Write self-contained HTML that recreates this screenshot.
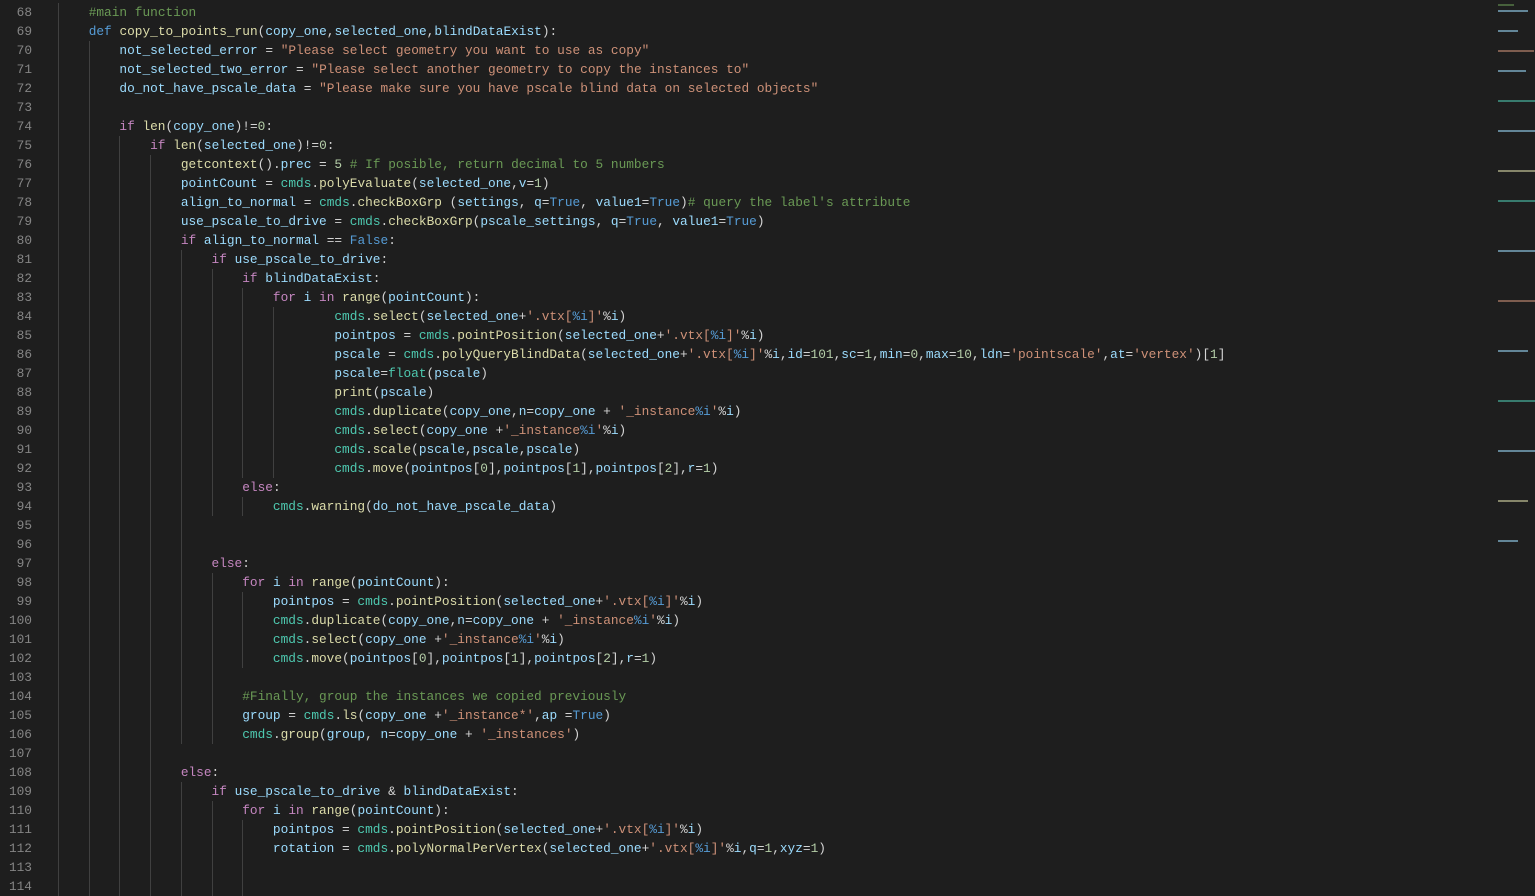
<!DOCTYPE html>
<html><head><meta charset="utf-8"><style>
html,body{margin:0;padding:0;background:#1e1e1e;width:1535px;height:887px;overflow:hidden}
.ln{position:absolute;left:0;width:32px;text-align:right;color:#858585;font:12.8px/19px "Liberation Mono",monospace}
.code{position:absolute;left:58px;top:3px;font:12.8px/19px "Liberation Mono",monospace;color:#d4d4d4}
.l{height:19px;white-space:pre}
i{display:inline-block;width:4ch;height:19px;vertical-align:top;box-shadow:inset 1px 0 #404040;font-style:normal}
.k{color:#c586c0}.d{color:#569cd6}.v{color:#9cdcfe}.f{color:#dcdcaa}.c{color:#4ec9b0}.s{color:#ce9178}.n{color:#b5cea8}.m{color:#6a9955}
.mm{position:absolute;left:1498px;height:2px;opacity:.55}
</style></head><body>
<div class="ln" style="top:3px">68<br>69<br>70<br>71<br>72<br>73<br>74<br>75<br>76<br>77<br>78<br>79<br>80<br>81<br>82<br>83<br>84<br>85<br>86<br>87<br>88<br>89<br>90<br>91<br>92<br>93<br>94<br>95<br>96<br>97<br>98<br>99<br>100<br>101<br>102<br>103<br>104<br>105<br>106<br>107<br>108<br>109<br>110<br>111<br>112<br>113<br>114</div>
<div class="code">
<div class="l"><i></i><span class="m">#main function</span></div>
<div class="l"><i></i><span class="d">def</span> <span class="f">copy_to_points_run</span>(<span class="v">copy_one</span>,<span class="v">selected_one</span>,<span class="v">blindDataExist</span>):</div>
<div class="l"><i></i><i></i><span class="v">not_selected_error</span> = <span class="s">"Please select geometry you want to use as copy"</span></div>
<div class="l"><i></i><i></i><span class="v">not_selected_two_error</span> = <span class="s">"Please select another geometry to copy the instances to"</span></div>
<div class="l"><i></i><i></i><span class="v">do_not_have_pscale_data</span> = <span class="s">"Please make sure you have pscale blind data on selected objects"</span></div>
<div class="l"><i></i><i></i></div>
<div class="l"><i></i><i></i><span class="k">if</span> <span class="f">len</span>(<span class="v">copy_one</span>)!=<span class="n">0</span>:</div>
<div class="l"><i></i><i></i><i></i><span class="k">if</span> <span class="f">len</span>(<span class="v">selected_one</span>)!=<span class="n">0</span>:</div>
<div class="l"><i></i><i></i><i></i><i></i><span class="f">getcontext</span>().<span class="v">prec</span> = <span class="n">5</span> <span class="m"># If posible, return decimal to 5 numbers</span></div>
<div class="l"><i></i><i></i><i></i><i></i><span class="v">pointCount</span> = <span class="c">cmds</span>.<span class="f">polyEvaluate</span>(<span class="v">selected_one</span>,<span class="v">v</span>=<span class="n">1</span>)</div>
<div class="l"><i></i><i></i><i></i><i></i><span class="v">align_to_normal</span> = <span class="c">cmds</span>.<span class="f">checkBoxGrp</span> (<span class="v">settings</span>, <span class="v">q</span>=<span class="d">True</span>, <span class="v">value1</span>=<span class="d">True</span>)<span class="m"># query the label's attribute</span></div>
<div class="l"><i></i><i></i><i></i><i></i><span class="v">use_pscale_to_drive</span> = <span class="c">cmds</span>.<span class="f">checkBoxGrp</span>(<span class="v">pscale_settings</span>, <span class="v">q</span>=<span class="d">True</span>, <span class="v">value1</span>=<span class="d">True</span>)</div>
<div class="l"><i></i><i></i><i></i><i></i><span class="k">if</span> <span class="v">align_to_normal</span> == <span class="d">False</span>:</div>
<div class="l"><i></i><i></i><i></i><i></i><i></i><span class="k">if</span> <span class="v">use_pscale_to_drive</span>:</div>
<div class="l"><i></i><i></i><i></i><i></i><i></i><i></i><span class="k">if</span> <span class="v">blindDataExist</span>:</div>
<div class="l"><i></i><i></i><i></i><i></i><i></i><i></i><i></i><span class="k">for</span> <span class="v">i</span> <span class="k">in</span> <span class="f">range</span>(<span class="v">pointCount</span>):</div>
<div class="l"><i></i><i></i><i></i><i></i><i></i><i></i><i></i><i></i>    <span class="c">cmds</span>.<span class="f">select</span>(<span class="v">selected_one</span>+<span class="s">'.vtx[<span class="d">%i</span>]'</span>%<span class="v">i</span>)</div>
<div class="l"><i></i><i></i><i></i><i></i><i></i><i></i><i></i><i></i>    <span class="v">pointpos</span> = <span class="c">cmds</span>.<span class="f">pointPosition</span>(<span class="v">selected_one</span>+<span class="s">'.vtx[<span class="d">%i</span>]'</span>%<span class="v">i</span>)</div>
<div class="l"><i></i><i></i><i></i><i></i><i></i><i></i><i></i><i></i>    <span class="v">pscale</span> = <span class="c">cmds</span>.<span class="f">polyQueryBlindData</span>(<span class="v">selected_one</span>+<span class="s">'.vtx[<span class="d">%i</span>]'</span>%<span class="v">i</span>,<span class="v">id</span>=<span class="n">101</span>,<span class="v">sc</span>=<span class="n">1</span>,<span class="v">min</span>=<span class="n">0</span>,<span class="v">max</span>=<span class="n">10</span>,<span class="v">ldn</span>=<span class="s">'pointscale'</span>,<span class="v">at</span>=<span class="s">'vertex'</span>)[<span class="n">1</span>]</div>
<div class="l"><i></i><i></i><i></i><i></i><i></i><i></i><i></i><i></i>    <span class="v">pscale</span>=<span class="c">float</span>(<span class="v">pscale</span>)</div>
<div class="l"><i></i><i></i><i></i><i></i><i></i><i></i><i></i><i></i>    <span class="f">print</span>(<span class="v">pscale</span>)</div>
<div class="l"><i></i><i></i><i></i><i></i><i></i><i></i><i></i><i></i>    <span class="c">cmds</span>.<span class="f">duplicate</span>(<span class="v">copy_one</span>,<span class="v">n</span>=<span class="v">copy_one</span> + <span class="s">'_instance<span class="d">%i</span>'</span>%<span class="v">i</span>)</div>
<div class="l"><i></i><i></i><i></i><i></i><i></i><i></i><i></i><i></i>    <span class="c">cmds</span>.<span class="f">select</span>(<span class="v">copy_one</span> +<span class="s">'_instance<span class="d">%i</span>'</span>%<span class="v">i</span>)</div>
<div class="l"><i></i><i></i><i></i><i></i><i></i><i></i><i></i><i></i>    <span class="c">cmds</span>.<span class="f">scale</span>(<span class="v">pscale</span>,<span class="v">pscale</span>,<span class="v">pscale</span>)</div>
<div class="l"><i></i><i></i><i></i><i></i><i></i><i></i><i></i><i></i>    <span class="c">cmds</span>.<span class="f">move</span>(<span class="v">pointpos</span>[<span class="n">0</span>],<span class="v">pointpos</span>[<span class="n">1</span>],<span class="v">pointpos</span>[<span class="n">2</span>],<span class="v">r</span>=<span class="n">1</span>)</div>
<div class="l"><i></i><i></i><i></i><i></i><i></i><i></i><span class="k">else</span>:</div>
<div class="l"><i></i><i></i><i></i><i></i><i></i><i></i><i></i><span class="c">cmds</span>.<span class="f">warning</span>(<span class="v">do_not_have_pscale_data</span>)</div>
<div class="l"><i></i><i></i><i></i><i></i><i></i></div>
<div class="l"><i></i><i></i><i></i><i></i><i></i></div>
<div class="l"><i></i><i></i><i></i><i></i><i></i><span class="k">else</span>:</div>
<div class="l"><i></i><i></i><i></i><i></i><i></i><i></i><span class="k">for</span> <span class="v">i</span> <span class="k">in</span> <span class="f">range</span>(<span class="v">pointCount</span>):</div>
<div class="l"><i></i><i></i><i></i><i></i><i></i><i></i><i></i><span class="v">pointpos</span> = <span class="c">cmds</span>.<span class="f">pointPosition</span>(<span class="v">selected_one</span>+<span class="s">'.vtx[<span class="d">%i</span>]'</span>%<span class="v">i</span>)</div>
<div class="l"><i></i><i></i><i></i><i></i><i></i><i></i><i></i><span class="c">cmds</span>.<span class="f">duplicate</span>(<span class="v">copy_one</span>,<span class="v">n</span>=<span class="v">copy_one</span> + <span class="s">'_instance<span class="d">%i</span>'</span>%<span class="v">i</span>)</div>
<div class="l"><i></i><i></i><i></i><i></i><i></i><i></i><i></i><span class="c">cmds</span>.<span class="f">select</span>(<span class="v">copy_one</span> +<span class="s">'_instance<span class="d">%i</span>'</span>%<span class="v">i</span>)</div>
<div class="l"><i></i><i></i><i></i><i></i><i></i><i></i><i></i><span class="c">cmds</span>.<span class="f">move</span>(<span class="v">pointpos</span>[<span class="n">0</span>],<span class="v">pointpos</span>[<span class="n">1</span>],<span class="v">pointpos</span>[<span class="n">2</span>],<span class="v">r</span>=<span class="n">1</span>)</div>
<div class="l"><i></i><i></i><i></i><i></i><i></i><i></i></div>
<div class="l"><i></i><i></i><i></i><i></i><i></i><i></i><span class="m">#Finally, group the instances we copied previously</span></div>
<div class="l"><i></i><i></i><i></i><i></i><i></i><i></i><span class="v">group</span> = <span class="c">cmds</span>.<span class="f">ls</span>(<span class="v">copy_one</span> +<span class="s">'_instance*'</span>,<span class="v">ap</span> =<span class="d">True</span>)</div>
<div class="l"><i></i><i></i><i></i><i></i><i></i><i></i><span class="c">cmds</span>.<span class="f">group</span>(<span class="v">group</span>, <span class="v">n</span>=<span class="v">copy_one</span> + <span class="s">'_instances'</span>)</div>
<div class="l"><i></i><i></i><i></i><i></i></div>
<div class="l"><i></i><i></i><i></i><i></i><span class="k">else</span>:</div>
<div class="l"><i></i><i></i><i></i><i></i><i></i><span class="k">if</span> <span class="v">use_pscale_to_drive</span> &amp; <span class="v">blindDataExist</span>:</div>
<div class="l"><i></i><i></i><i></i><i></i><i></i><i></i><span class="k">for</span> <span class="v">i</span> <span class="k">in</span> <span class="f">range</span>(<span class="v">pointCount</span>):</div>
<div class="l"><i></i><i></i><i></i><i></i><i></i><i></i><i></i><span class="v">pointpos</span> = <span class="c">cmds</span>.<span class="f">pointPosition</span>(<span class="v">selected_one</span>+<span class="s">'.vtx[<span class="d">%i</span>]'</span>%<span class="v">i</span>)</div>
<div class="l"><i></i><i></i><i></i><i></i><i></i><i></i><i></i><span class="v">rotation</span> = <span class="c">cmds</span>.<span class="f">polyNormalPerVertex</span>(<span class="v">selected_one</span>+<span class="s">'.vtx[<span class="d">%i</span>]'</span>%<span class="v">i</span>,<span class="v">q</span>=<span class="n">1</span>,<span class="v">xyz</span>=<span class="n">1</span>)</div>
<div class="l"><i></i><i></i><i></i><i></i><i></i><i></i><i></i></div>
<div class="l"><i></i><i></i><i></i><i></i><i></i><i></i><i></i></div>
</div>
<div class="mm" style="top:4px;width:16px;background:#6a9955"></div>
<div class="mm" style="top:10px;width:30px;background:#9cdcfe"></div>
<div class="mm" style="top:30px;width:20px;background:#9cdcfe"></div>
<div class="mm" style="top:50px;width:36px;background:#ce9178"></div>
<div class="mm" style="top:70px;width:28px;background:#9cdcfe"></div>
<div class="mm" style="top:100px;width:37px;background:#4ec9b0"></div>
<div class="mm" style="top:130px;width:37px;background:#9cdcfe"></div>
<div class="mm" style="top:170px;width:37px;background:#dcdcaa"></div>
<div class="mm" style="top:200px;width:37px;background:#4ec9b0"></div>
<div class="mm" style="top:250px;width:37px;background:#9cdcfe"></div>
<div class="mm" style="top:300px;width:37px;background:#ce9178"></div>
<div class="mm" style="top:350px;width:30px;background:#9cdcfe"></div>
<div class="mm" style="top:400px;width:37px;background:#4ec9b0"></div>
<div class="mm" style="top:450px;width:37px;background:#9cdcfe"></div>
<div class="mm" style="top:500px;width:30px;background:#dcdcaa"></div>
<div class="mm" style="top:540px;width:20px;background:#9cdcfe"></div>
</body></html>
